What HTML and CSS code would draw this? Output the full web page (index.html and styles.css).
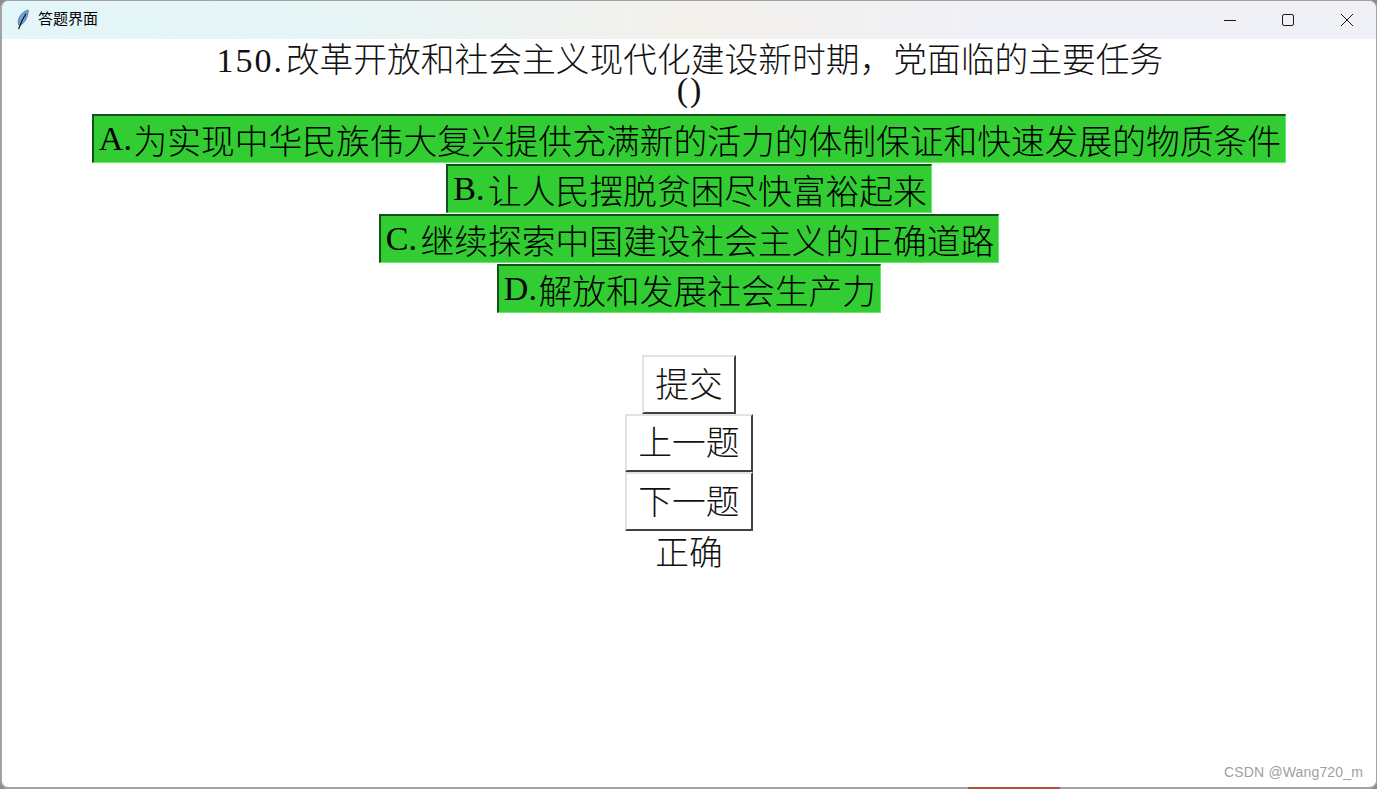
FILE: index.html
```html
<!DOCTYPE html>
<html lang="zh-CN">
<head>
    <meta charset="UTF-8">
    <title>答题界面</title>
    <link rel="stylesheet" href="styles.css">
</head>
<body>
    <div class="window">
        <div class="titlebar">
            <svg class="app-icon" width="16" height="22" viewBox="0 0 16 22">
                <path d="M14.2 1 C10 2 6 5.5 4.6 10.5 C4 13 4.2 15 5 16.5 C8.5 15.5 11.5 12.5 13 8 C13.8 5.5 14.4 3 14.2 1 Z" fill="#6fa3e0" stroke="#3d5478" stroke-width="0.6"/>
                <path d="M12 4.5 C9.5 8.5 7 13 4.6 20" fill="none" stroke="#10151f" stroke-width="1.2"/>
            </svg>
            <span class="window-title">答题界面</span>
            <div class="controls">
                <div class="control">
                    <svg width="14" height="14" viewBox="0 0 14 14"><path d="M1 7.5 H13" stroke="#1a1a1a" stroke-width="1"/></svg>
                </div>
                <div class="control">
                    <svg width="14" height="14" viewBox="0 0 14 14"><rect x="1.5" y="1.5" width="11" height="11" rx="1.5" fill="none" stroke="#1a1a1a" stroke-width="1"/></svg>
                </div>
                <div class="control">
                    <svg width="14" height="14" viewBox="0 0 14 14"><path d="M1 1 L13 13 M13 1 L1 13" stroke="#1a1a1a" stroke-width="1"/></svg>
                </div>
            </div>
        </div>

        <div class="content">
            <div class="question"><span class="latin number">150.</span>改革开放和社会主义现代化建设新时期，党面临的主要任务<br><span class="latin paren">()</span></div>

            <div class="options">
                <div class="option"><span class="latin prefix">A.</span>为实现中华民族伟大复兴提供充满新的活力的体制保证和快速发展的物质条件</div>
                <div class="option"><span class="latin prefix">B.</span>让人民摆脱贫困尽快富裕起来</div>
                <div class="option"><span class="latin prefix">C.</span>继续探索中国建设社会主义的正确道路</div>
                <div class="option"><span class="latin prefix">D.</span>解放和发展社会生产力</div>
            </div>

            <div class="actions">
                <button class="button">提交</button>
                <button class="button">上一题</button>
                <button class="button">下一题</button>
            </div>
            <div class="result">正确</div>
        </div>

        <div class="watermark">CSDN @Wang720_m</div>
        <div class="edge-red"></div>
    </div>
</body>
</html>
```

FILE: styles.css
```css
html, body {
    margin: 0;
    height: 100%;
    overflow: hidden;
    background-color: #8c8c8c;
}
.window {
    position: relative;
    box-sizing: border-box;
    height: 789px;
    display: flex;
    flex-direction: column;
    background-color: white;
    border: 1px solid #a3a3a3;
    border-left-width: 2px;
    border-bottom-width: 2px;
    border-radius: 8px;
    color: #111;
    font-family: "Noto Sans CJK SC", sans-serif;
    font-weight: 300;
}
.titlebar {
    display: flex;
    align-items: center;
    flex: none;
    height: 38px;
    padding-left: 12px;
    border-radius: 7px 7px 0 0;
    background: linear-gradient(90deg, #e3f6f9 0%, #e6f4f5 25%, #f4f1ec 50%, #f0f1f7 72%, #f0f1f7 100%);
}
.app-icon {
    margin-right: 8px;
}
.window-title {
    margin-bottom: 5px;
    font-size: 15px;
    font-weight: 400;
    color: #000;
}
.controls {
    display: flex;
    margin-left: auto;
}
.control {
    display: flex;
    align-items: center;
    justify-content: center;
    width: 58.6px;
    height: 38px;
}
.content {
    display: flex;
    flex-direction: column;
    align-items: center;
    font-size: 33.75px;
}
.latin {
    font-family: "Liberation Serif", serif;
    font-size: 34px;
    font-weight: 400;
    line-height: 0;
}
.number {
    display: inline-block;
    width: 71px;
    letter-spacing: 2px;
}
.paren {
    padding-left: 2px;
    vertical-align: 3px;
    letter-spacing: 2px;
}
.prefix {
    display: inline-block;
    flex: none;
    width: 34.75px;
}
.question {
    padding-top: 3px;
    margin-bottom: 8px;
    line-height: 32px;
    text-align: center;
    white-space: nowrap;
}
.options {
    display: flex;
    flex-direction: column;
    align-items: center;
    gap: 1px;
}
.option {
    box-sizing: border-box;
    display: flex;
    align-items: center;
    height: 49px;
    padding: 0 4px 0 5px;
    background-color: #32cd32;
    border-style: solid;
    border-width: 2px 1px 1px 2px;
    border-color: #14501a #66ea66 #66ea66 #14501a;
    color: #000;
    white-space: nowrap;
}
.actions {
    display: flex;
    flex-direction: column;
    align-items: center;
    margin-top: 42px;
}
.button {
    box-sizing: border-box;
    height: 58.67px;
    padding: 0 11px 4px;
    background-color: white;
    border: 2px solid;
    border-color: #e2e2e2 #404040 #404040 #e2e2e2;
    color: #111;
    font: inherit;
}
.result {
    line-height: 40px;
}
.watermark {
    position: absolute;
    right: 13px;
    bottom: 7px;
    color: #a0a0a0;
    font-family: "Liberation Sans", sans-serif;
    font-size: 14px;
    font-weight: 400;
    letter-spacing: 0.15px;
}
.edge-red {
    position: absolute;
    left: 966px;
    bottom: -2px;
    width: 92px;
    height: 2px;
    background-color: #b0503c;
}
```
